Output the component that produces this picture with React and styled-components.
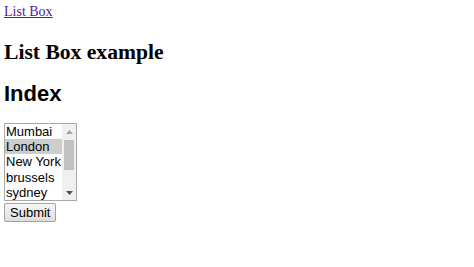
import styled, { createGlobalStyle } from "styled-components";

const GlobalStyle = createGlobalStyle`
  body {
    margin: 0;
    padding: 4px;
    background: #ffffff;
    font-family: "Liberation Serif", "Times New Roman", serif;
  }
`;

const Page = styled.div`
  display: flex;
  flex-direction: column;
  align-items: flex-start;
`;

const TopLink = styled.a`
  font-size: 14px;
  line-height: 16px;
  color: #551a8b;
  text-decoration: underline;
`;

const Title = styled.h2`
  margin: 20px 0 0;
  font-size: 21.6px;
  line-height: 24px;
  font-weight: bold;
  color: #000;
`;

const SubTitle = styled.h2`
  margin: 18px 0 0;
  font-family: "Liberation Sans", Arial, sans-serif;
  font-size: 22px;
  line-height: 24px;
  font-weight: bold;
  color: #000;
`;

const ListBox = styled.div`
  margin-top: 17px;
  display: flex;
  width: 71px;
  height: 76px;
  border: 1px solid #a9a9a9;
  background: #fff;
`;

const Options = styled.div`
  flex: 1;
  display: flex;
  flex-direction: column;
`;

const Option = styled.div`
  height: 15.2px;
  padding-left: 1px;
  font-family: "Liberation Sans", Arial, sans-serif;
  font-size: 13px;
  line-height: 15px;
  color: #000;
  background: ${(p) => (p.$selected ? "#cdcdcd" : "transparent")};
  white-space: nowrap;
`;

const ScrollBar = styled.div`
  width: 14px;
  display: flex;
  flex-direction: column;
  background: #f0f0f0;
`;

const Arrow = styled.div`
  height: 15px;
  display: flex;
  align-items: center;
  justify-content: center;
`;

const Track = styled.div`
  flex: 1;
  display: flex;
  flex-direction: column;
  padding: 1px 2px;
`;

const Thumb = styled.div`
  height: 30px;
  background: #c1c1c1;
`;

const SubmitButton = styled.button`
  margin-top: 2px;
  height: 19px;
  padding: 0 5px;
  font-family: "Liberation Sans", Arial, sans-serif;
  font-size: 13px;
  line-height: 15px;
  color: #000;
  background: linear-gradient(#f6f6f6, #dedede);
  border: 1px solid #a3a3a3;
  border-radius: 2px;
`;

const cities = ["Mumbai", "London", "New York", "brussels", "sydney"];

const App = () => {
  return (
    <Page>
      <GlobalStyle />
      <TopLink href="#">List Box</TopLink>
      <Title>List Box example</Title>
      <SubTitle>Index</SubTitle>
      <ListBox>
        <Options>
          {cities.map((c) => (
            <Option key={c} $selected={c === "London"}>
              {c}
            </Option>
          ))}
        </Options>
        <ScrollBar>
          <Arrow>
            <svg width="7" height="4" viewBox="0 0 7 4">
              <polygon points="0,4 3.5,0 7,4" fill="#a3a3a3" />
            </svg>
          </Arrow>
          <Track>
            <Thumb />
          </Track>
          <Arrow>
            <svg width="7" height="4" viewBox="0 0 7 4">
              <polygon points="0,0 7,0 3.5,4" fill="#505050" />
            </svg>
          </Arrow>
        </ScrollBar>
      </ListBox>
      <SubmitButton>Submit</SubmitButton>
    </Page>
  );
};

export default App;
